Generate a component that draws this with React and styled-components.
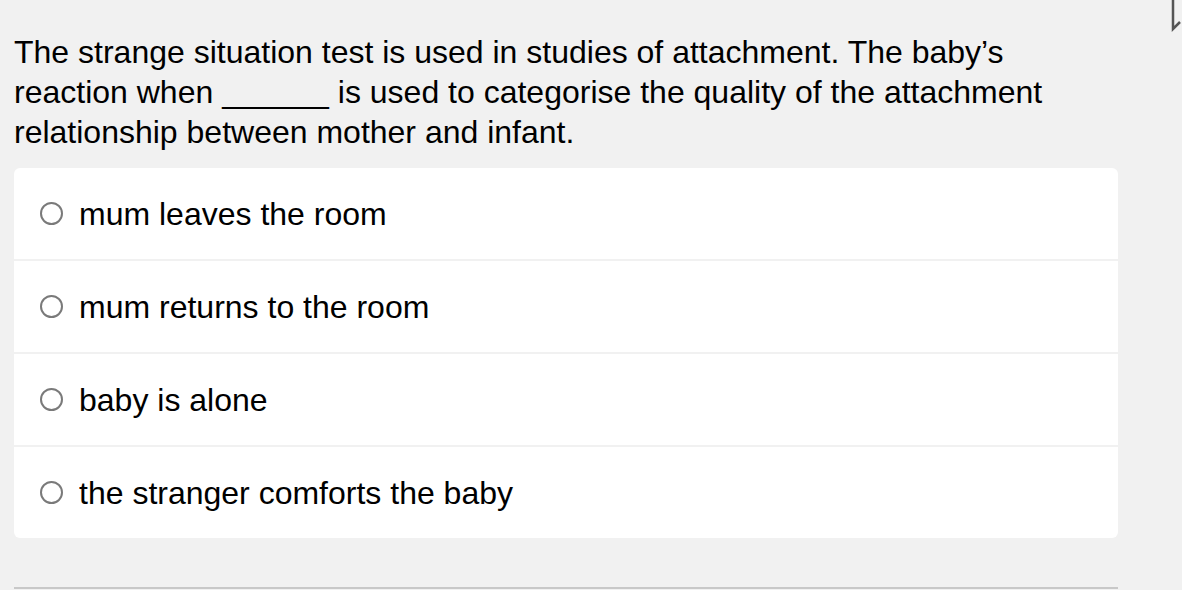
import React from 'react';
import styled, { createGlobalStyle } from 'styled-components';

const GlobalStyle = createGlobalStyle`
  html, body {
    margin: 0;
    padding: 0;
    background: #f1f1f1;
  }
  body {
    font-family: 'Liberation Sans', Arial, sans-serif;
    color: #000;
  }
`;

const options = [
  'mum leaves the room',
  'mum returns to the room',
  'baby is alone',
  'the stranger comforts the baby',
];

export default function App() {
  return (
    <>
      <GlobalStyle />
      <Page>
        <Corner width="12" height="32" viewBox="0 0 12 32">
          <path d="M3 0 V29 L10 22" fill="none" stroke="#555" strokeWidth="2.5" />
        </Corner>
        <Question>
          The strange situation test is used in studies of attachment. The baby’s
          reaction when ______ is used to categorise the quality of the attachment
          relationship between mother and infant.
        </Question>
        <Card>
          {options.map((text, i) => (
            <Option key={`opt-${i}`}>
              <Radio role="radio" aria-checked="false" />
              <Label>{text}</Label>
            </Option>
          ))}
        </Card>
        <Divider />
      </Page>
    </>
  );
}

const Page = styled.div`
  position: relative;
  height: 590px;
  padding: 32px 0 0 14px;
  box-sizing: border-box;
  overflow: hidden;
`;

const Corner = styled.svg`
  position: absolute;
  top: 0;
  right: 0;
`;

const Question = styled.p`
  margin: 0;
  width: 1070px;
  font-size: 32px;
  line-height: 40px;
`;

const Card = styled.div`
  margin-top: 16px;
  width: 1104px;
  background: #fff;
  border-radius: 6px;
  display: flex;
  flex-direction: column;
`;

const Option = styled.label`
  display: flex;
  align-items: center;
  height: 91px;
  padding-left: 26px;
  & + & {
    border-top: 2px solid #f1f1f1;
  }
`;

const Radio = styled.span`
  flex: none;
  margin-right: 16px;
  width: 23px;
  height: 23px;
  border: 2px solid #7a7a7a;
  border-radius: 50%;
  background: #fff;
  box-sizing: border-box;
`;

const Label = styled.span`
  font-size: 32px;
  line-height: 40px;
`;

const Divider = styled.div`
  margin-top: 49px;
  width: 1104px;
  height: 2px;
  background: #c8c8c8;
`;
